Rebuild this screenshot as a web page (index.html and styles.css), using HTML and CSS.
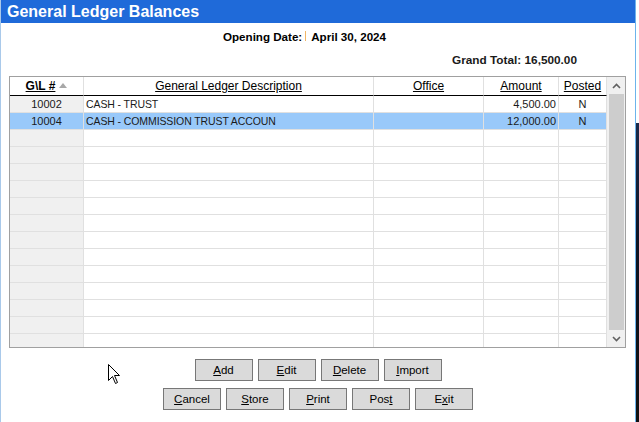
FILE: index.html
```html
<!DOCTYPE html>
<html lang="en">
  <head>
    <meta charset="UTF-8" />
    <title>General Ledger Balances</title>
    <link rel="stylesheet" href="styles.css">
  </head>
  <body>
    <div class="screen">
      <div class="window">
        <div class="titlebar">General Ledger Balances</div>

        <div class="opening">
          <span class="label">Opening Date:</span>
          <span class="caret"></span>
          <span class="value">April 30, 2024</span>
        </div>
        <div class="total">Grand Total: 16,500.00</div>

        <div class="grid">
          <div class="grid-main">
            <div class="row head">
              <div class="cell"><span class="sorted">G\L #</span><span class="sort-arrow"></span></div>
              <div class="cell"><u>General Ledger Description</u></div>
              <div class="cell"><u>Office</u></div>
              <div class="cell"><u>Amount</u></div>
              <div class="cell"><u>Posted</u></div>
            </div>
            <div class="row">
              <div class="cell key">10002</div>
              <div class="cell desc">CASH - TRUST</div>
              <div class="cell"></div>
              <div class="cell num">4,500.00</div>
              <div class="cell mid">N</div>
            </div>
            <div class="row selected">
              <div class="cell key">10004</div>
              <div class="cell desc">CASH - COMMISSION TRUST ACCOUN</div>
              <div class="cell"></div>
              <div class="cell num">12,000.00</div>
              <div class="cell mid">N</div>
            </div>
            <div class="row"><div class="cell key"></div><div class="cell"></div><div class="cell"></div><div class="cell"></div><div class="cell"></div></div>
            <div class="row"><div class="cell key"></div><div class="cell"></div><div class="cell"></div><div class="cell"></div><div class="cell"></div></div>
            <div class="row"><div class="cell key"></div><div class="cell"></div><div class="cell"></div><div class="cell"></div><div class="cell"></div></div>
            <div class="row"><div class="cell key"></div><div class="cell"></div><div class="cell"></div><div class="cell"></div><div class="cell"></div></div>
            <div class="row"><div class="cell key"></div><div class="cell"></div><div class="cell"></div><div class="cell"></div><div class="cell"></div></div>
            <div class="row"><div class="cell key"></div><div class="cell"></div><div class="cell"></div><div class="cell"></div><div class="cell"></div></div>
            <div class="row"><div class="cell key"></div><div class="cell"></div><div class="cell"></div><div class="cell"></div><div class="cell"></div></div>
            <div class="row"><div class="cell key"></div><div class="cell"></div><div class="cell"></div><div class="cell"></div><div class="cell"></div></div>
            <div class="row"><div class="cell key"></div><div class="cell"></div><div class="cell"></div><div class="cell"></div><div class="cell"></div></div>
            <div class="row"><div class="cell key"></div><div class="cell"></div><div class="cell"></div><div class="cell"></div><div class="cell"></div></div>
            <div class="row"><div class="cell key"></div><div class="cell"></div><div class="cell"></div><div class="cell"></div><div class="cell"></div></div>
            <div class="row"><div class="cell key"></div><div class="cell"></div><div class="cell"></div><div class="cell"></div><div class="cell"></div></div>
            <div class="row"><div class="cell key"></div><div class="cell"></div><div class="cell"></div><div class="cell"></div><div class="cell"></div></div>
          </div>
          <div class="scrollbar">
            <div class="arrow">
              <svg width="9" height="6" viewBox="0 0 9 6"><path d="M1 5 L4.5 1.5 L8 5" fill="none" stroke="#606060" stroke-width="1.6"/></svg>
            </div>
            <div class="thumb"></div>
            <div class="arrow">
              <svg width="9" height="6" viewBox="0 0 9 6"><path d="M1 1 L4.5 4.5 L8 1" fill="none" stroke="#606060" stroke-width="1.6"/></svg>
            </div>
          </div>
        </div>

        <div class="buttons">
          <button><u>A</u>dd</button>
          <button><u>E</u>dit</button>
          <button><u>D</u>elete</button>
          <button><u>I</u>mport</button>
        </div>
        <div class="buttons">
          <button><u>C</u>ancel</button>
          <button><u>S</u>tore</button>
          <button><u>P</u>rint</button>
          <button>Pos<u>t</u></button>
          <button>E<u>x</u>it</button>
        </div>
      </div>
      <div class="desktop-edge">
        <div class="edge-top"></div>
        <div class="edge-bottom"></div>
      </div>
    </div>

    <svg class="cursor" width="13" height="21" viewBox="0 0 13 21">
      <path d="M0.5 0.5 L0.5 16.5 L4.5 12.5 L7.5 19.5 L9.5 18.5 L6.5 11.5 L11.5 11.5 Z" fill="#fff" stroke="#000" stroke-width="1"/>
    </svg>
  </body>
</html>
```

FILE: styles.css
```css
body {
  margin: 0;
  font-family: "Liberation Sans", Arial, sans-serif;
  color: #000;
  background: #fff;
}
.screen {
  display: flex;
  width: 639px;
  height: 422px;
  overflow: hidden;
}
.window {
  width: 634px;
  height: 422px;
  border-left: 1px solid #a9c9ea;
  border-right: 1px solid #6cb4ec;
  background: #fff;
}
.titlebar {
  height: 23px;
  line-height: 24px;
  padding-left: 6px;
  background: #1f6ad9;
  color: #fff;
  font-size: 16px;
  font-weight: bold;
}
.opening {
  display: flex;
  align-items: center;
  height: 14px;
  margin-top: 6px;
  padding-left: 222px;
  font-size: 11.6px;
  font-weight: bold;
}
.caret {
  width: 1px;
  height: 10px;
  margin: 0 5px 0 3px;
  background: #f2b766;
}
.total {
  height: 14px;
  margin-top: 10px;
  padding-right: 58px;
  text-align: right;
  font-size: 11.8px;
  font-weight: bold;
  color: #1a1a1a;
}
.grid {
  display: flex;
  width: 615px;
  height: 270px;
  margin: 9px 0 0 8px;
  border: 1px solid #a0a0a0;
}
.grid-main {
  width: 597px;
  height: 270px;
  overflow: hidden;
}
.row {
  display: grid;
  grid-template-columns: 74px 290px 110px 75px 48px;
  height: 17px;
}
.cell {
  box-sizing: border-box;
  border-right: 1px solid #e0e0e0;
  border-bottom: 1px solid #e0e0e0;
  font-size: 10.5px;
  line-height: 16px;
  white-space: nowrap;
  overflow: hidden;
  color: #1a1a1a;
}
.row.head {
  height: 19px;
}
.row.head .cell {
  border-bottom: 1px solid #000;
  font-size: 12px;
  line-height: 18px;
  text-align: center;
  color: #000;
}
.sorted {
  font-weight: bold;
  text-decoration: underline;
}
.sort-arrow {
  display: inline-block;
  width: 0;
  height: 0;
  margin-left: 4px;
  vertical-align: 2px;
  border-left: 4px solid transparent;
  border-right: 4px solid transparent;
  border-bottom: 5px solid #a8a8a8;
}
.key {
  background: #f0f0f0;
  text-align: center;
  font-size: 11px;
}
.desc {
  padding-left: 2px;
  letter-spacing: -0.1px;
}
.num {
  padding-right: 2px;
  text-align: right;
  font-size: 11px;
}
.mid {
  text-align: center;
  font-size: 11px;
}
.selected .cell {
  background: #99c9fa;
}
.scrollbar {
  display: flex;
  flex-direction: column;
  width: 18px;
  background: #f0f0f0;
}
.arrow {
  display: flex;
  align-items: center;
  justify-content: center;
  height: 17px;
}
.thumb {
  flex: 1;
  margin: 0 1px 0 2px;
  background: #cdcdcd;
}
.buttons {
  display: flex;
  justify-content: center;
  gap: 5px;
  margin-top: 11px;
}
.buttons + .buttons {
  margin-top: 7px;
}
button {
  width: 58px;
  height: 22px;
  padding: 0;
  border: 1px solid #777;
  background: #dadada;
  font-family: "Liberation Sans", Arial, sans-serif;
  font-size: 11.5px;
  color: #000;
}
.desktop-edge {
  display: flex;
  flex-direction: column;
  width: 3px;
}
.edge-top {
  height: 123px;
  background: #fff;
}
.edge-bottom {
  flex: 1;
  background: linear-gradient(#1b2a4a, #0d1424 40%, #111 100%);
}
.cursor {
  position: absolute;
  left: 108px;
  top: 364px;
}
```
